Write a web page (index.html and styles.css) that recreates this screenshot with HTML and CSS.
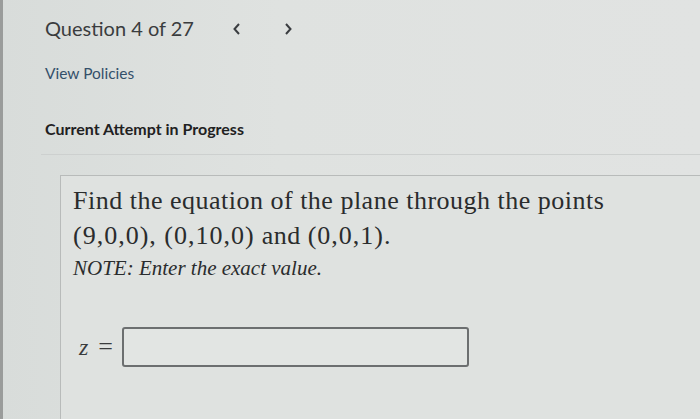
FILE: index.html
```html
<!DOCTYPE html>
<html>
<head>
<meta charset="utf-8">
<link rel="stylesheet" href="styles.css">
</head>
<body>
<div class="page">
  <header class="qhead">
    <span class="qtitle">Question 4 of 27</span>
    <span class="nav">
      <svg class="chev" width="10" height="14" viewBox="0 0 10 14"><path d="M7 2 L2.5 7 L7 12" fill="none" stroke="#3a3d40" stroke-width="2"/></svg>
      <svg class="chev" width="10" height="14" viewBox="0 0 10 14"><path d="M3 2 L7.5 7 L3 12" fill="none" stroke="#3a3d40" stroke-width="2"/></svg>
    </span>
  </header>
  <a class="policies">View Policies</a>
  <div class="attempt">Current Attempt in Progress</div>
  <div class="rule"></div>
  <section class="qbox">
    <p class="prompt">Find the equation of the plane through the points<br><span class="math">(9,0,0), (0,10,0)</span> and <span class="math">(0,0,1).</span></p>
    <p class="note">NOTE: Enter the exact value.</p>
    <div class="answer">
      <span class="lhs"><i>z</i><span class="eq">=</span></span>
      <span class="inputbox"></span>
    </div>
  </section>
</div>
</body>
</html>
```

FILE: styles.css
```css
html, body {
  margin: 0;
  padding: 0;
  height: 100%;
  overflow: hidden;
}
body {
  background: linear-gradient(90deg, #d8dcda 0%, #dfe2e0 40%, #e1e3e2 100%);
  border-left: 3px solid #9a9c9b;
  box-sizing: border-box;
  font-family: Lato, "Open Sans", sans-serif;
  color: #2b2d2e;
}
.page {
  padding: 16px 0 0 42px;
  display: flex;
  flex-direction: column;
}
.qhead {
  display: flex;
  align-items: center;
  height: 24px;
}
.qtitle {
  font-size: 20px;
  color: #3a3c3e;
}
.nav {
  display: flex;
  gap: 41px;
  margin-left: 38px;
  padding-top: 2px;
}
.policies {
  margin-top: 24px;
  font-size: 15.5px;
  color: #34506a;
}
.attempt {
  margin-top: 37px;
  font-size: 16px;
  font-weight: bold;
  color: #1f2122;
}
.rule {
  margin-top: 16px;
  margin-left: -4px;
  height: 1px;
  background: #cdd0cf;
}
.qbox {
  margin-top: 20px;
  margin-left: 15px;
  border-top: 1px solid #b8bbba;
  border-left: 1px solid #b8bbba;
  background: #dfe2e0;
  padding: 7px 0 0 12px;
  height: 236px;
}
.prompt {
  margin: 0;
  font-family: "Liberation Serif", serif;
  font-size: 26px;
  line-height: 35px;
  letter-spacing: 0.5px;
  color: #2a2c2d;
}
.math {
  letter-spacing: 1px;
}
.note {
  margin: 2px 0 0;
  font-family: "Liberation Serif", serif;
  font-style: italic;
  font-size: 21px;
  line-height: 26px;
  color: #2a2c2d;
}
.answer {
  display: flex;
  align-items: center;
  margin-top: 46px;
  padding-left: 6px;
}
.lhs {
  display: flex;
  align-items: center;
  gap: 10px;
  font-family: "Liberation Serif", serif;
  font-size: 24px;
  color: #3a3c3d;
  width: 43px;
}
.eq {
  font-size: 26px;
}
.inputbox {
  width: 343px;
  height: 36px;
  border: 2px solid #6c6f70;
  border-radius: 3px;
  background: #e2e5e3;
}
```
